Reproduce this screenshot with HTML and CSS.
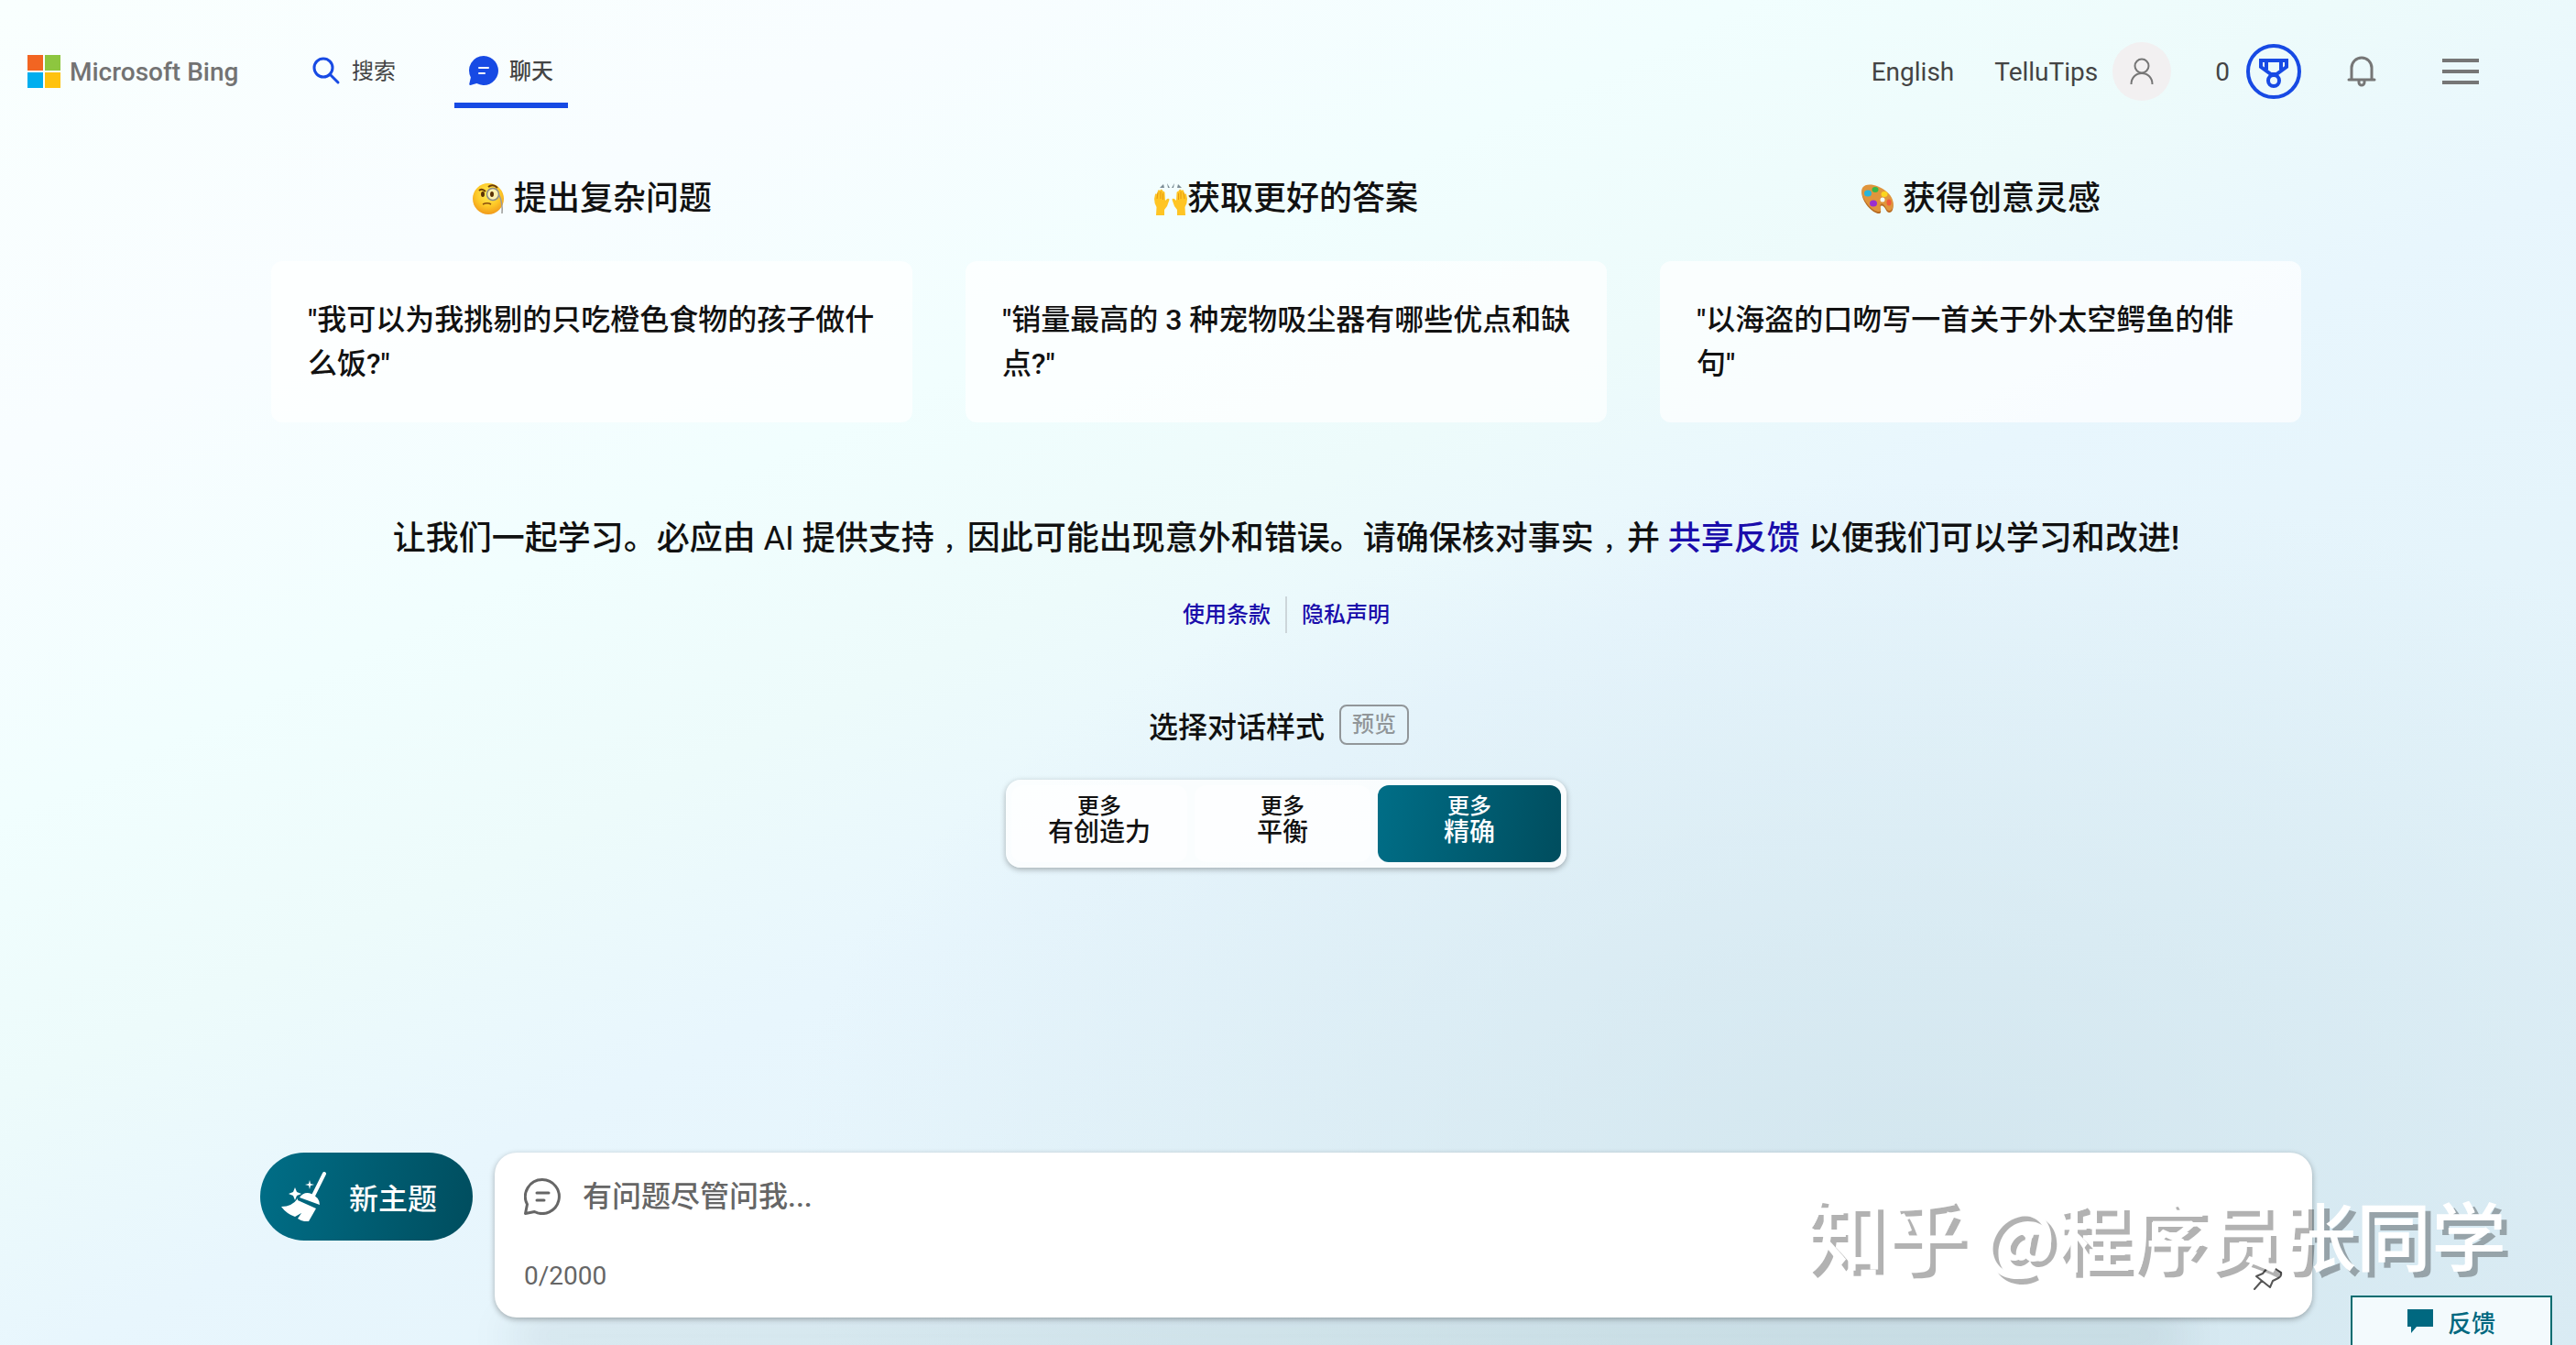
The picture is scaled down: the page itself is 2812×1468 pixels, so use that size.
FILE: index.html
```html
<!DOCTYPE html>
<html lang="zh-CN">
<head>
  <meta charset="UTF-8">
  <title>Microsoft Bing</title>
  <link rel="stylesheet" href="styles.css">
</head>
<body>
  <header class="topbar">
    <a class="logo" href="#">
      <svg width="36" height="36" viewBox="0 0 36 36" aria-hidden="true">
        <rect width="17" height="17" fill="#f26522"/>
        <rect x="19" width="17" height="17" fill="#8dc63f"/>
        <rect y="19" width="17" height="17" fill="#00aeef"/>
        <rect x="19" y="19" width="17" height="17" fill="#ffc20e"/>
      </svg>
      <span>Microsoft Bing</span>
    </a>
    <nav class="tabs">
      <a class="tab" href="#">
        <svg width="32" height="32" viewBox="0 0 32 32" fill="none" stroke="#174ae4" stroke-width="3" stroke-linecap="round" aria-hidden="true">
          <circle cx="13" cy="13" r="10"/>
          <path d="M20 20l9 9"/>
        </svg>
        搜索
      </a>
      <a class="tab active" href="#">
        <svg width="32" height="32" viewBox="0 0 32 32" aria-hidden="true">
          <path d="M16 0a16 16 0 1 1-7.600 30.100L1.500 32Q0 32 0.300 30.500L1.900 23.500A16 16 0 0 1 16 0z" fill="#174ae4"/>
          <path d="M11 13h10M11 19h6" stroke="#fff" stroke-width="2" stroke-linecap="round"/>
        </svg>
        聊天
      </a>
    </nav>
    <div class="account">
      <a class="lang" href="#">English</a>
      <a class="user" href="#">
        TelluTips
        <span class="avatar">
          <svg width="28" height="30" viewBox="0 0 28 30" fill="none" stroke="#767676" stroke-width="2" aria-hidden="true">
            <circle cx="14" cy="9" r="7.500"/>
            <path d="M2.500 29c0-7.500 5-12 11.500-12s11.500 4.500 11.500 12"/>
          </svg>
        </span>
      </a>
      <a class="rewards" href="#">
        0
        <svg width="60" height="60" viewBox="0 0 60 60" fill="none" stroke="#174ae4" stroke-width="4" aria-hidden="true">
          <circle cx="30" cy="30" r="28"/>
          <path d="M16 18h28v7l-11 8h-6l-11-8zM22 18v10M38 18v10"/>
          <circle cx="30" cy="40" r="6"/>
        </svg>
      </a>
      <button class="icon-btn bell" aria-label="通知">
        <svg width="32" height="34" viewBox="0 0 32 34" fill="none" stroke="#767676" stroke-width="3" stroke-linejoin="round" stroke-linecap="round" aria-hidden="true">
          <path d="M5 25V13a11 11 0 0 1 22 0v12M2 26h28M13 27v2a3 3 0 0 0 6 0v-2"/>
        </svg>
      </button>
      <button class="icon-btn menu" aria-label="菜单">
        <svg width="40" height="28" viewBox="0 0 40 28" stroke="#767676" stroke-width="4" aria-hidden="true">
          <path d="M0 2h40M0 14h40M0 26h40"/>
        </svg>
      </button>
    </div>
  </header>

  <main class="content">
    <section class="examples">
      <div class="example">
        <h2>
          <svg class="emoji" width="36" height="36" viewBox="0 0 36 36" aria-hidden="true">
            <defs>
              <radialGradient id="face" cx="50%" cy="35%" r="65%">
                <stop offset="0" stop-color="#fff05a"/>
                <stop offset="0.600" stop-color="#fdc827"/>
                <stop offset="1" stop-color="#f19a1b"/>
              </radialGradient>
            </defs>
            <circle cx="18" cy="18" r="17" fill="url(#face)"/>
            <path d="M8 9q3-3 7 1M18 5q5-4 10 1" stroke="#6b3d09" stroke-width="2" fill="none"/>
            <ellipse cx="12" cy="13" rx="2" ry="3" fill="#5b3206"/>
            <circle cx="23" cy="13" r="6.500" fill="#fff2b0" stroke="#8b8b88" stroke-width="1.500"/>
            <ellipse cx="22" cy="13" rx="2" ry="3" fill="#5b3206"/>
            <path d="M12 24q5-2.500 9 0" stroke="#8a4f0d" stroke-width="1.500" fill="none"/>
            <path d="M30 14q4 9 3 20" stroke="#9a9a98" stroke-width="1.500" fill="none"/>
          </svg>
          提出复杂问题
        </h2>
        <button class="card">"我可以为我挑剔的只吃橙色食物的孩子做什么饭?"</button>
      </div>
      <div class="example">
        <h2 class="tight">
          <svg class="emoji" width="36" height="36" viewBox="0 0 36 36" aria-hidden="true">
            <path id="hand" d="M2 36l.500-9Q0 23 0 18l1-5q1-1.500 2 0l1-4q1-1.500 2 0l1-1q1.500-1 2 1l1 1q1.500-.500 1.500 1.500L12 20l2-2q2.500-1 2.500 1L14 26l-3 4v6z" fill="#ffc524"/>
            <use href="#hand" transform="matrix(-1 0 0 1 36 0)"/>
            <path d="M4 11l-1 7M7 10v8M9.500 12v7M32 11l1 7M29 10v8M26.500 12v7" stroke="#e59a10" stroke-width="1"/>
            <path d="M6 6l4-4 1 4zM14 1l3 5h-2zM22 1l-3 5h2zM30 6l-4-4-1 4z" fill="#7b8c94"/>
          </svg>
          获取更好的答案
        </h2>
        <button class="card">"销量最高的 3 种宠物吸尘器有哪些优点和缺点?"</button>
      </div>
      <div class="example">
        <h2>
          <svg class="emoji" width="36" height="36" viewBox="0 0 36 36" aria-hidden="true">
            <path d="M2 7C6 1 18 3 27 10c8 6 10 14 8 20-1 3-4 4-6 2-2-3-4-8-7-6-2 2 2 6-1 8C13 35-2 18 2 7z" fill="#b86b21"/>
            <path d="M2 6C6 0 18 2 27 9c8 6 10 13 8 19-1 3-4 4-6 2-2-3-4-8-7-6-2 2 2 6-1 8C13 33-2 16 2 6z" fill="#e0953c"/>
            <ellipse cx="8" cy="12" rx="4" ry="3.500" fill="#27b5dc"/>
            <ellipse cx="16" cy="8" rx="3.500" ry="3" fill="#35b84a"/>
            <ellipse cx="26" cy="13" rx="3.500" ry="3" fill="#fbd51f"/>
            <ellipse cx="14" cy="23" rx="4" ry="3.500" fill="#9a2fd0"/>
            <ellipse cx="31" cy="22" rx="2.500" ry="3.500" fill="#f05a3c"/>
            <circle cx="24" cy="19" r="2.500" fill="#f2fdfe"/>
          </svg>
          获得创意灵感
        </h2>
        <button class="card">"以海盗的口吻写一首关于外太空鳄鱼的俳句"</button>
      </div>
    </section>

    <p class="notice">让我们一起学习。必应由 <span class="latin">AI</span> 提供支持<span class="comma">，</span>因此可能出现意外和错误。请确保核对事实<span class="comma">，</span>并 <a href="#">共享反馈</a> 以便我们可以学习和改进!</p>

    <div class="legal">
      <a href="#">使用条款</a>
      <a href="#">隐私声明</a>
    </div>

    <section class="tone">
      <div class="tone-title">选择对话样式 <span class="preview">预览</span></div>
      <div class="tone-options">
        <button><small>更多</small>有创造力</button>
        <button><small>更多</small>平衡</button>
        <button class="selected"><small>更多</small>精确</button>
      </div>
    </section>
  </main>

  <footer class="composer">
    <button class="new-topic">
      <svg width="50" height="54" viewBox="0 0 50 54" fill="#fff" aria-hidden="true">
        <path d="M47 2L35 26" stroke="#fff" stroke-width="4" stroke-linecap="round"/>
        <path d="M20 28q5-7 13-4 9 4 9 12z"/>
        <path d="M18 31l20 9-8 14q-6 1-12-3l4-6-7 4q-9-3-15-11 12 0 18-9z"/>
        <path d="M15 17l2 5 5 2-5 2-2 5-2-5-5-2 5-2zM31 9l1 4 4 1-4 1-1 4-1-4-4-1 4-1z"/>
      </svg>
      新主题
    </button>
    <div class="input-box">
      <div class="input-row">
        <svg width="40" height="40" viewBox="0 0 40 40" fill="none" stroke="#666" stroke-width="3" stroke-linejoin="round" stroke-linecap="round" aria-hidden="true">
          <path d="M20 1.500a18.500 18.500 0 1 1-8.500 35L1.500 38.500l2-10A18.500 18.500 0 0 1 20 1.500zM14 16h13M14 24h8"/>
        </svg>
        <input type="text" placeholder="有问题尽管问我..." aria-label="有问题尽管问我">
      </div>
      <div class="input-foot">
        <span>0/2000</span>
        <button class="icon-btn" aria-label="固定">
          <svg width="32" height="30" viewBox="0 0 32 30" fill="none" stroke="#555" stroke-width="2" stroke-linejoin="round" stroke-linecap="round" aria-hidden="true">
            <path d="M17 2l13 9q1 4-3 6l-6 3-3 7L3 15l7-3 5-6zM9 20L1 29"/>
          </svg>
        </button>
      </div>
    </div>
  </footer>

  <button class="feedback">
    <svg width="28" height="26" viewBox="0 0 28 26" fill="#006880" aria-hidden="true">
      <path d="M0 0h28v19H10l-6 7v-7H0z"/>
    </svg>
    反馈
  </button>
  <div class="watermark"><span>知乎</span> @程序员张同学</div>
</body>
</html>
```

FILE: styles.css
```css
* {
  box-sizing: border-box;
}

body {
  margin: 0;
  min-height: 100vh;
  padding-right: 4px;
  display: flex;
  flex-direction: column;
  overflow: hidden;
  font-family: Roboto, "Noto Sans CJK SC", sans-serif;
  font-size: 32px;
  font-weight: 500;
  color: #111;
  background:
    radial-gradient(ellipse at 75% 88%, rgba(207, 227, 236, 0.8), transparent 42%),
    linear-gradient(155deg, #f9fffe 0%, #f8fdff 18%, #f1fefe 32%, #edfbfb 43%, #e8f6fd 54%, #e3f3fa 75%, #deeff7 100%);
}

a {
  color: #1a0dab;
  text-decoration: none;
}

button {
  border: 0;
  padding: 0;
  background: none;
  font: inherit;
  color: inherit;
  cursor: pointer;
}

svg {
  display: block;
  flex: none;
}

/* top bar */
.topbar {
  display: flex;
  align-items: center;
  height: 156px;
  padding: 0 102px 0 30px;
}

.logo {
  display: flex;
  align-items: center;
  gap: 10px;
  width: 310px;
  font-size: 28px;
  color: #737373;
}

.tabs {
  display: flex;
  align-self: flex-start;
  height: 118px;
  gap: 48px;
}

.tab {
  display: flex;
  align-items: center;
  gap: 12px;
  padding: 38px 16px 0 0;
  border-bottom: 6px solid transparent;
  font-size: 24px;
  font-weight: 400;
  color: #444;
}

.tab svg {
  margin-top: 4px;
}

.tab.active {
  padding-left: 16px;
  border-color: #174ae4;
  font-weight: 500;
}

.account {
  display: flex;
  align-items: center;
  margin-left: auto;
  font-size: 28px;
  font-weight: 400;
}

.account a {
  color: #444;
}

.user,
.rewards {
  display: flex;
  align-items: center;
  gap: 16px;
}

.rewards {
  gap: 18px;
}

.user {
  margin: 0 48px 0 44px;
}

.avatar {
  display: flex;
  align-items: center;
  justify-content: center;
  width: 64px;
  height: 64px;
  border-radius: 50%;
  background: #f2f0f1;
}

.bell {
  margin: 0 72px 0 50px;
}

/* examples */
.content {
  width: 80%;
  max-width: 2216px;
  margin: 0 auto;
}

.examples {
  display: grid;
  grid-template-columns: repeat(3, 1fr);
  gap: 58px;
}

.example h2 {
  display: flex;
  align-items: center;
  justify-content: center;
  gap: 10px;
  margin: 36px 0 43px;
  font-size: 36px;
  line-height: 50px;
  font-weight: 500;
}

.example h2.tight {
  gap: 0;
}

.card {
  display: block;
  width: 100%;
  padding: 40px 32px 40px 40px;
  border-radius: 12px;
  background: rgba(255, 255, 255, 0.7);
  line-height: 48px;
  text-align: left;
}

.notice {
  margin: 102px 0 0;
  font-size: 36px;
  line-height: 50px;
  text-align: center;
}

.latin {
  font-weight: 400;
}

/* smaller comma, centred in a full-width cell */
.comma {
  padding-left: 10px;
  font-size: 26px;
}

.legal {
  display: flex;
  justify-content: center;
  margin-top: 35px;
  font-size: 24px;
  line-height: 40px;
}

.legal a {
  padding: 0 16px;
}

.legal a + a {
  border-left: 2px solid #ccd6da;
}

/* conversation style */
.tone-title {
  display: flex;
  align-items: center;
  justify-content: center;
  gap: 16px;
  margin: 77px 16px 37px 0;
}

.preview {
  padding: 0 12px;
  border: 2px solid #919699;
  border-radius: 8px;
  font-size: 24px;
  line-height: 40px;
  color: #919699;
}

.tone-options {
  display: grid;
  grid-template-columns: 192px 192px 200px;
  gap: 8px;
  width: fit-content;
  margin: 0 auto;
  padding: 6px;
  border-radius: 16px;
  background: rgba(255, 255, 255, 0.8);
  box-shadow: 0 2px 6px rgba(0, 0, 0, 0.3);
}

.tone-options button {
  height: 84px;
  padding-bottom: 8px;
  border-radius: 12px;
  background: rgba(255, 255, 255, 0.5);
  font-size: 28px;
  line-height: 30px;
}

.tone-options small {
  display: block;
  font-size: 24px;
  line-height: 28px;
}

.tone-options .selected,
.new-topic {
  background: linear-gradient(100deg, #006e87, #004d5e);
  color: #fff;
}

/* composer */
.composer {
  display: flex;
  align-items: flex-start;
  gap: 24px;
  width: 80%;
  max-width: 2240px;
  margin: auto auto 0;
  padding-bottom: 30px;
}

.new-topic {
  display: flex;
  align-items: center;
  gap: 24px;
  height: 96px;
  padding: 0 39px 0 23px;
  border-radius: 48px;
}

.input-box {
  flex: 1;
  height: 180px;
  padding: 24px 32px;
  border-radius: 24px;
  background: #fff;
  box-shadow: 0 2px 6px rgba(0, 0, 0, 0.3), -60px 110px 50px -80px rgba(0, 50, 60, 0.2);
}

.input-row,
.input-foot {
  display: flex;
  align-items: center;
}

.input-row {
  gap: 24px;
}

.input-row input {
  flex: 1;
  height: 48px;
  padding: 0;
  border: 0;
  outline: 0;
  background: none;
  font: inherit;
}

.input-row input::placeholder {
  color: #666;
}

.input-foot {
  justify-content: space-between;
  margin-top: 45px;
  font-size: 28px;
  line-height: 36px;
  font-weight: 400;
  color: #666;
}

.feedback {
  position: fixed;
  right: 26px;
  bottom: 0;
  display: flex;
  align-items: center;
  justify-content: center;
  gap: 16px;
  width: 220px;
  height: 54px;
  border: 2px solid #006c70;
  border-bottom: 0;
  background: #f3fafd;
  font-size: 26px;
  color: #006880;
}

.watermark {
  position: fixed;
  right: 76px;
  bottom: 62px;
  font-family: "Noto Sans CJK SC", sans-serif;
  font-size: 82px;
  line-height: 120px;
  font-weight: 500;
  color: #fff;
  text-shadow: 6px 6px 0 rgba(0, 0, 0, 0.3);
  pointer-events: none;
}

.watermark span {
  font-size: 88px;
}
```
